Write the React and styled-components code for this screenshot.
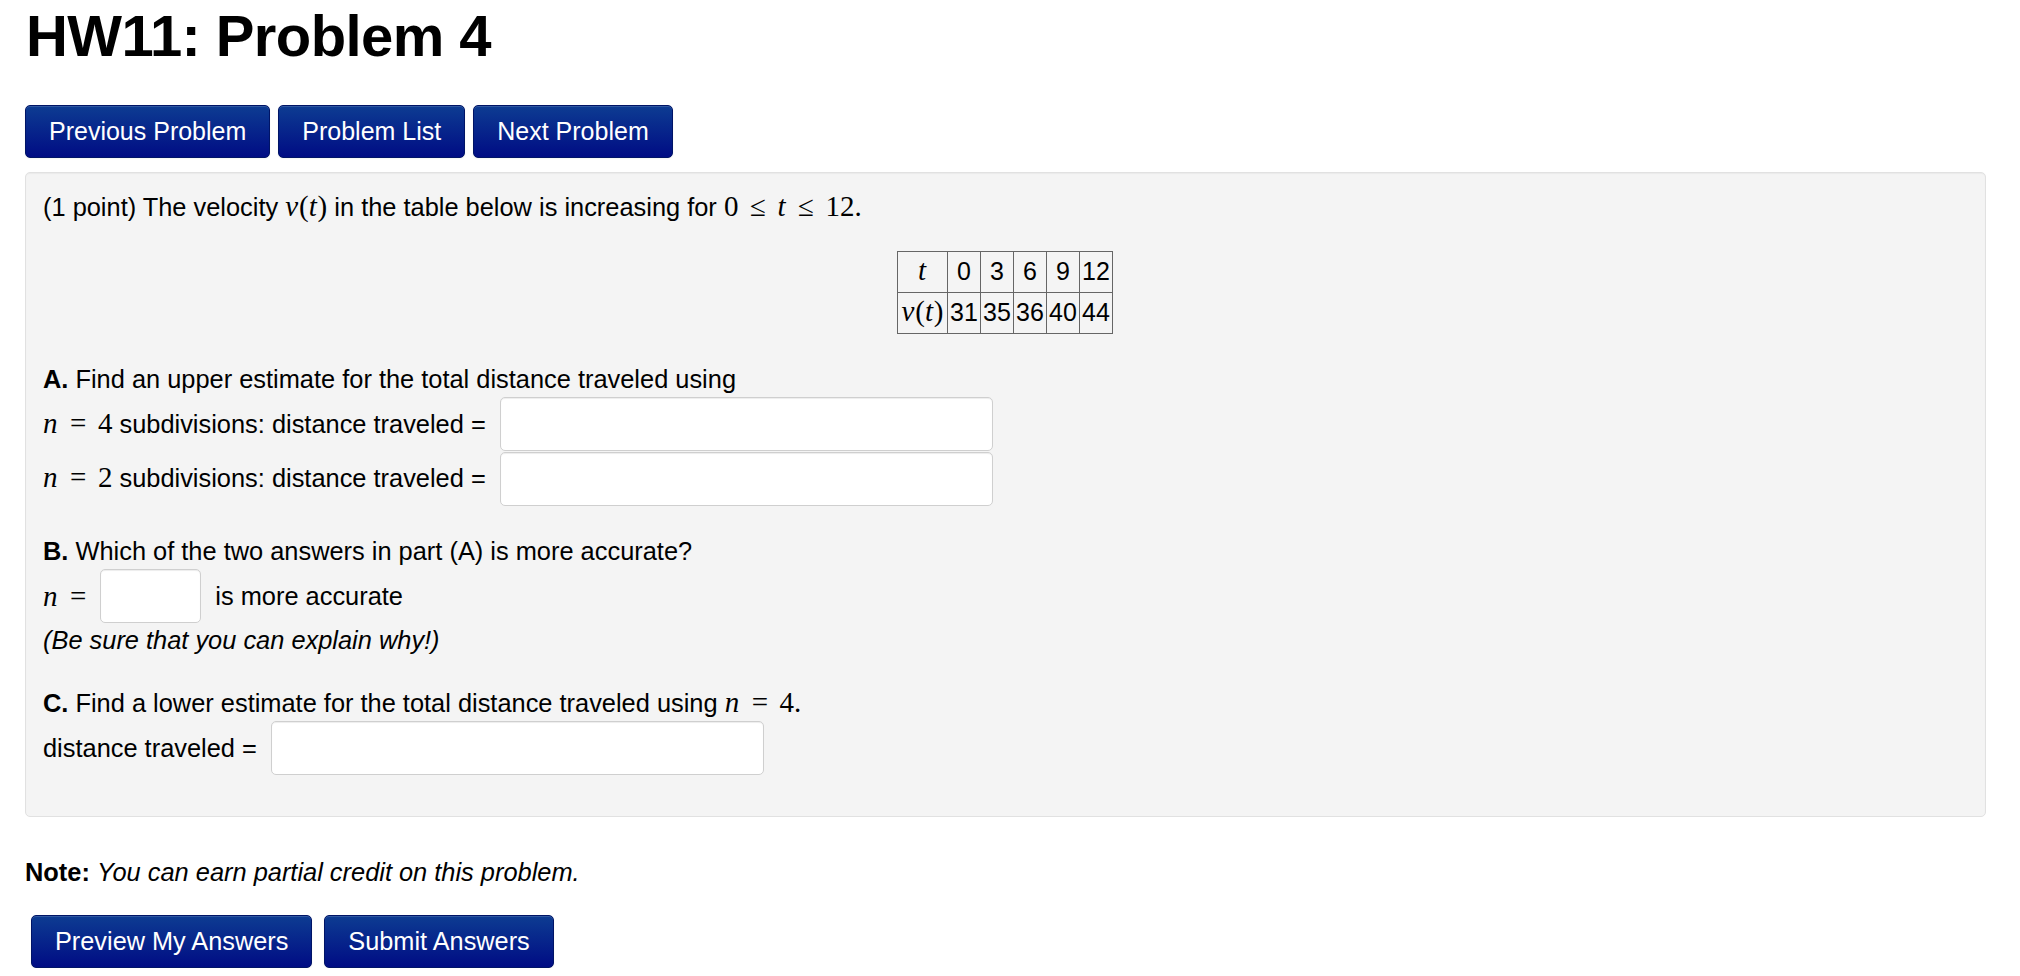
import React from "react";
import styled, { createGlobalStyle } from "styled-components";

const Global = createGlobalStyle`
  html, body { margin: 0; padding: 0; background: #fff; }
  body { font-family: "Liberation Sans", Arial, Helvetica, sans-serif; color: #000; font-size: 25.4px; }
`;

const Page = styled.div`
  padding: 0 34px 0 25px;
`;

const Title = styled.h1`
  margin: 0;
  padding-left: 1px;
  font-size: 58px;
  font-weight: 700;
  line-height: 72px;
  letter-spacing: -0.6px;
`;

const ButtonBar = styled.div`
  display: flex;
  gap: ${(p) => p.$gap || 8}px;
  margin-top: ${(p) => p.$top}px;
  padding-left: ${(p) => p.$indent || 0}px;
`;

const NavButton = styled.button`
  height: 53px;
  padding: 0 ${(p) => p.$pad || 23}px;
  border: 1px solid #001466;
  border-radius: 5px;
  background: linear-gradient(to bottom, #0d3c92 0%, #000c84 100%);
  color: #fff;
  font-family: "Liberation Sans", Arial, sans-serif;
  font-size: ${(p) => p.$size || 25}px;
  box-shadow: inset 0 1px 0 rgba(255,255,255,0.15), 0 1px 2px rgba(0,0,0,0.05);
  cursor: pointer;
`;

const Well = styled.div`
  margin-top: 14px;
  background: #f4f4f4;
  border: 1px solid #e1e1e1;
  border-radius: 5px;
  padding: 17px 18px 41px 17px;
  box-shadow: inset 0 1px 1px rgba(0,0,0,0.04);
`;

const Line = styled.div`
  line-height: 35px;
  margin-top: ${(p) => p.$gap || 0}px;
`;

const Row = styled.div`
  display: flex;
  align-items: center;
  gap: 14px;
  line-height: 35px;
  margin-top: ${(p) => p.$gap || 0}px;
`;

const Math = styled.span`
  font-family: "Liberation Serif", "Times New Roman", serif;
  font-size: 29px;
  line-height: 1;
`;

const Rel = styled.span`
  padding: 0 ${(p) => (p.$end ? 0 : 0.4)}em 0 0.4em;
`;

const Var = styled.i`
  font-family: "Liberation Serif", "Times New Roman", serif;
  font-style: italic;
  padding-right: 0.03em;
`;

const Answer = styled.input`
  box-sizing: border-box;
  width: ${(p) => p.$w}px;
  height: 54px;
  margin: ${(p) => (p.$stack ? "1px 0 0" : "0")};
  border: 1px solid #cfcfcf;
  border-radius: 5px;
  background: #fff;
  box-shadow: inset 0 1px 1px rgba(0,0,0,0.075);
  font-size: 25px;
  padding: 0 8px;
`;

const TableWrap = styled.div`
  display: flex;
  justify-content: center;
  margin-top: 26px;
`;

const DataTable = styled.table`
  border-collapse: collapse;
  border: 1px solid #555;
  background: #f4f4f4;
  text-align: center;
`;

const Cell = styled.td`
  border: 1px solid #666;
  padding: 2px 2px 3px;
  line-height: 35px;
  min-width: ${(p) => p.$min || 28}px;
  font-size: 25px;
`;

const Note = styled.div`
  margin-top: 38px;
  line-height: 35px;
`;

const Bold = styled.b`
  font-weight: 700;
`;

const Em = styled.i`
  font-style: italic;
`;

const M = ({ children }) => <Math>{children}</Math>;
const R = ({ children, end }) => <Rel $end={end}>{children}</Rel>;

export default function App() {
  const ts = ["0", "3", "6", "9", "12"];
  const vs = ["31", "35", "36", "40", "44"];
  return (
    <Page>
      <Global />
      <Title>HW11: Problem 4</Title>
      <ButtonBar $top={33}>
        <NavButton>Previous Problem</NavButton>
        <NavButton>Problem List</NavButton>
        <NavButton>Next Problem</NavButton>
      </ButtonBar>
      <Well>
        <Line>
          (1 point) The velocity <M><Var>v</Var>(<Var>t</Var>)</M> in the table below is increasing for{" "}
          <M>0<R>≤</R><Var>t</Var><R>≤</R>12.</M>
        </Line>
        <TableWrap>
          <DataTable>
            <tbody>
              <tr>
                <Cell $min={45}><M><Var>t</Var></M></Cell>
                {ts.map((t) => (
                  <Cell key={t}>{t}</Cell>
                ))}
              </tr>
              <tr>
                <Cell $min={45}><M><Var>v</Var>(<Var>t</Var>)</M></Cell>
                {vs.map((v) => (
                  <Cell key={v}>{v}</Cell>
                ))}
              </tr>
            </tbody>
          </DataTable>
        </TableWrap>
        <Line $gap={28}>
          <Bold>A.</Bold> Find an upper estimate for the total distance traveled using
        </Line>
        <Row>
          <span><M><Var>n</Var><R>=</R>4</M> subdivisions: distance traveled =</span>
          <Answer $w={493} />
        </Row>
        <Row>
          <span><M><Var>n</Var><R>=</R>2</M> subdivisions: distance traveled =</span>
          <Answer $w={493} $stack />
        </Row>
        <Line $gap={28}>
          <Bold>B.</Bold> Which of the two answers in part (A) is more accurate?
        </Line>
        <Row>
          <M><Var>n</Var><R end>=</R></M>
          <Answer $w={101} />
          <span>is more accurate</span>
        </Row>
        <Line>
          <Em>(Be sure that you can explain why!)</Em>
        </Line>
        <Line $gap={28}>
          <Bold>C.</Bold> Find a lower estimate for the total distance traveled using <M><Var>n</Var><R>=</R>4.</M>
        </Line>
        <Row>
          <span>distance traveled =</span>
          <Answer $w={493} />
        </Row>
      </Well>
      <Note>
        <Bold>Note:</Bold> <Em>You can earn partial credit on this problem.</Em>
      </Note>
      <ButtonBar $top={25} $indent={6} $gap={12}>
        <NavButton $size={25.3}>Preview My Answers</NavButton>
        <NavButton $size={25.3}>Submit Answers</NavButton>
      </ButtonBar>
    </Page>
  );
}
